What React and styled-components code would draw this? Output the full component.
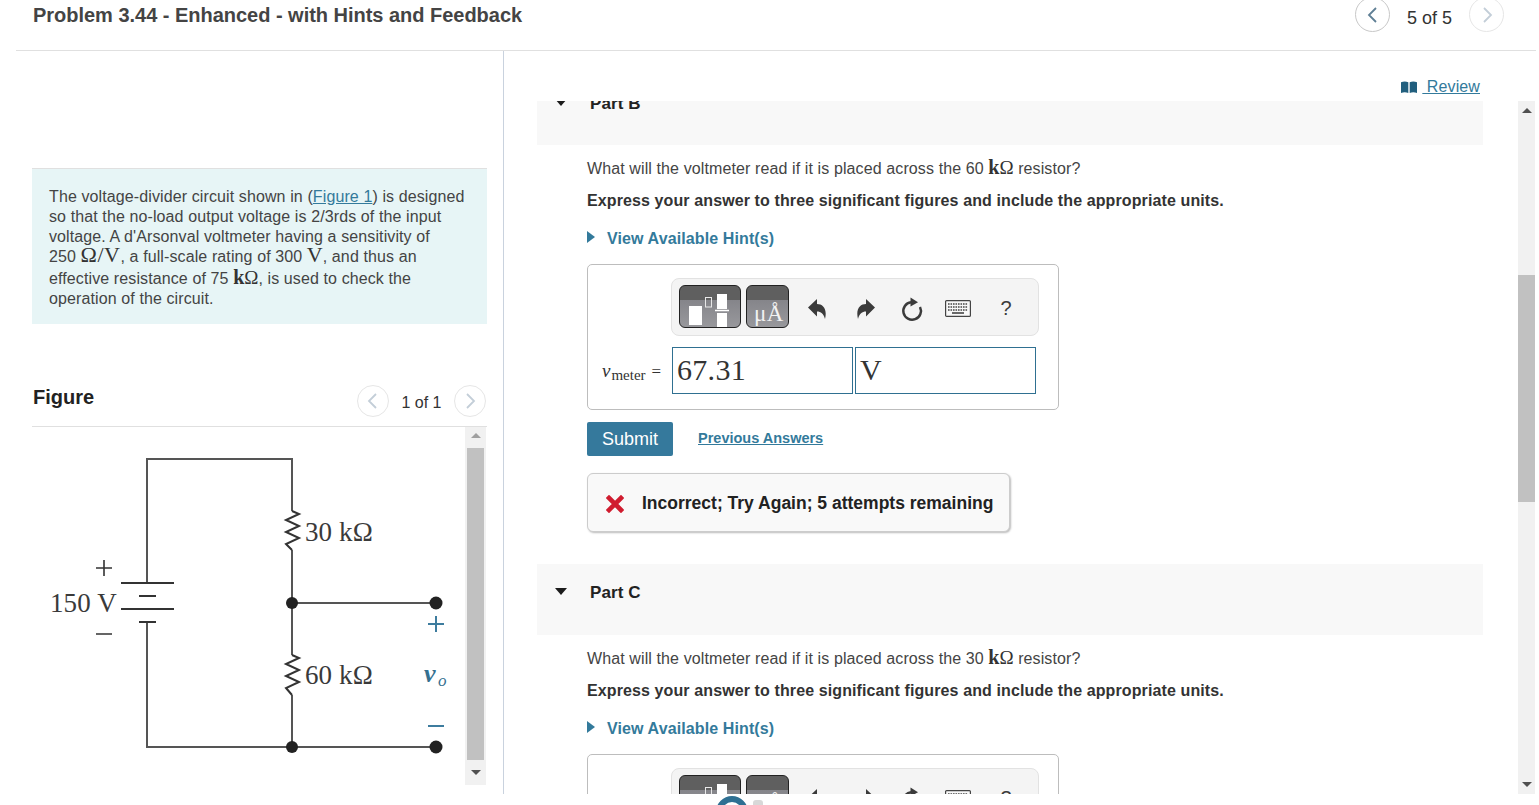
import React from "react";
import styled, { createGlobalStyle } from "styled-components";

const Global = createGlobalStyle`
  html, body { margin: 0; padding: 0; background: #fff; overflow: hidden; }
  * { box-sizing: border-box; }
`;
const sans = `"Liberation Sans", Arial, sans-serif`;
const serif = `"Liberation Serif", "Times New Roman", serif`;
const LINK = "#337a9b";

const Page = styled.div`
  position: relative; width: 1536px; height: 805px; overflow: hidden;
  font-family: ${sans}; font-size: 16px; color: #333; letter-spacing: 0.11px;
`;
const Header = styled.header`
  height: 51px; margin-left: 16px; padding: 0 32px 0 17px;
  border-bottom: 1px solid #e0e0e0;
  display: flex; justify-content: space-between; align-items: flex-start;
`;
const Title = styled.h1`
  margin: 3px 0 0; font-size: 20px; line-height: 24px; font-weight: 700; color: #444;
  letter-spacing: -0.02px;
`;
const Pager = styled.div`
  display: flex; align-items: center; margin-top: ${p => p.$top || 0}px;
`;
const PagerText = styled.span`
  color: #333; font-size: ${p => p.$size}px; text-align: center; width: ${p => p.$w}px;
  padding-top: ${p => p.$drop}px; letter-spacing: 0;
`;
const Round = styled.span`
  width: ${p => p.$d}px; height: ${p => p.$d}px; border-radius: 50%;
  border: 1px solid ${p => (p.$on ? "#c8c8c8" : "#e6e6e6")};
  display: flex; align-items: center; justify-content: center; background: #fff;
`;
const Body = styled.div`
  display: flex; height: 743px;
`;
const Left = styled.aside`
  width: 488px; margin-left: 16px; padding-left: 16px;
  border-right: 1px solid #c9d2de; flex: none;
`;
const Intro = styled.div`
  margin-top: 117px; width: 455px; height: 156px; padding: 18px 16px 0 17px;
  background: #e7f5f6; border-top: 1px solid #e0e0e0;
  line-height: 20px; color: #444;
  a { color: ${LINK}; }
`;
const Math = styled.span`
  font-family: ${serif}; font-size: ${p => p.$size || 20}px; font-weight: ${p => (p.$bold ? 700 : 400)};
  line-height: ${p => p.$lh || 0}px; color: #333; letter-spacing: ${p => p.$ls || 0}px;
`;
const NoBreak = styled.span`
  white-space: nowrap;
`;
const FigureHead = styled.div`
  margin-top: 56px; height: 47px; width: 455px; padding: 5px 1px 0 1px;
  border-bottom: 1px solid #e0e0e0;
  display: flex; justify-content: space-between; align-items: flex-start;
`;
const FigureTitle = styled.h2`
  margin: 0; font-size: 20px; line-height: 24px; font-weight: 700; color: #222; letter-spacing: 0;
`;
const FigureWrap = styled.div`
  display: flex; width: 454px; height: 358px;
`;
const CircuitBox = styled.div`
  flex: 1; min-width: 0;
  svg { display: block; }
`;
const VBar = styled.div`
  flex: none; width: ${p => p.$w}px; background: #f1f1f1;
  display: flex; flex-direction: column; align-items: center;
`;
const Arrow = styled.i`
  display: block; width: 0; height: 0; flex: none;
  border-left: 5px solid transparent; border-right: 5px solid transparent;
  ${p => (p.$down ? "border-top" : "border-bottom")}: 5px solid ${p => p.$c};
  margin: ${p => p.$m};
`;
const VTrack = styled.div`
  flex: 1; width: 100%; display: flex; justify-content: center; min-height: 0;
`;
const Thumb = styled.div`
  width: ${p => p.$w}px; background: #c1c1c1; height: ${p => p.$h}px; margin-top: ${p => p.$t}px;
`;
const Right = styled.main`
  flex: 1; min-width: 0; display: flex; flex-direction: column;
`;
const ReviewBar = styled.div`
  height: 50px; padding: 26px 56px 0 0;
  display: flex; justify-content: flex-end; align-items: flex-start;
`;
const ReviewLink = styled.a`
  display: flex; align-items: center; color: ${LINK}; text-decoration: underline;
  line-height: 20px; white-space: pre;
  svg { margin-right: 5px; }
`;
const ScrollRow = styled.div`
  flex: 1; display: flex; min-height: 0; padding-right: 1px;
`;
const Scroll = styled.div`
  flex: 1; min-width: 0; overflow: hidden; padding: 0 0 0 33px;
`;
const Inner = styled.div`
  margin-top: -26px; width: 946px;
`;
const PartBar = styled.div`
  height: ${p => p.$h}px; background: #f8f8f8; padding: 19px 0 0 18px;
  display: flex; align-items: flex-start;
`;
const Caret = styled.i`
  display: block; width: 0; height: 0; margin-top: 5px;
  border-left: 6px solid transparent; border-right: 6px solid transparent;
  border-top: 7px solid #1c1c1c;
`;
const PartTitle = styled.h3`
  margin: 0 0 0 23px; font-size: 17px; line-height: 20px; font-weight: 700; color: #222;
`;
const Section = styled.section`
  padding-left: 50px;
`;
const Question = styled.p`
  margin: 14px 0 0; line-height: 20px; color: #444;
`;
const Instruction = styled.p`
  margin: 12px 0 0; line-height: 20px; font-weight: 700; color: #333;
`;
const Hint = styled.div`
  margin-top: 18px; height: 20px; display: flex; align-items: center;
  font-weight: 700; color: ${LINK}; line-height: 20px;
`;
const HintCaret = styled.i`
  display: block; width: 0; height: 0; margin: -4px 12px 0 0;
  border-top: 6px solid transparent; border-bottom: 6px solid transparent;
  border-left: 8px solid ${LINK};
`;
const AnswerBox = styled.div`
  margin-top: 15px; width: 472px; height: 146px; padding: 13px 0 0 83px;
  border: 1px solid #bdbdbd; border-radius: 5px; background: #fff;
`;
const Toolbar = styled.div`
  width: 368px; height: 58px; padding: 6px 0 0 7px;
  background: #f4f4f4; border: 1px solid #e2e2e2; border-radius: 8px;
  display: flex; align-items: flex-start;
`;
const KeyBtn = styled.span`
  width: ${p => p.$w}px; height: 43px; margin-right: ${p => p.$mr || 0}px; flex: none;
  border: 1px solid #222; border-radius: 6px;
  background: linear-gradient(#5f5f5f 0, #5f5f5f 14px, #85858a 14px, #98989c 100%);
  color: #f2f2f2; font-family: ${serif}; font-size: 23px; line-height: 1;
  position: relative; overflow: hidden; display: block;
  svg { display: block; }
`;
const UnitGlyph = styled.span`
  position: absolute; left: 7px; bottom: 0; line-height: 27px; letter-spacing: 0.5px;
`;
const Slot = styled.span`
  width: ${p => p.$w}px; height: 47px; flex: none; color: #3b3b3b;
  display: flex; align-items: center; justify-content: center;
  font-size: 20px;
`;
const InputRow = styled.div`
  margin: 11px 0 0 -70px; display: flex; align-items: center;
`;
const VarLabel = styled.span`
  flex: none; width: 86px; margin-left: -15px; padding: 0 0 0 16px;
  font-family: ${serif}; font-size: 17px; color: #333; white-space: nowrap; letter-spacing: 0;
  em { font-size: 19px; }
  sub { font-size: 15px; vertical-align: -3px; line-height: 0; margin: 0 6px 0 1px; }
`;
const Field = styled.div`
  width: ${p => p.$w}px; height: 47px; margin-right: 2px; flex: none;
  border: 1px solid #2f7091; padding: 0 4px;
  font-family: ${serif}; font-size: 30px; line-height: 43px; color: #333; letter-spacing: 0.3px;
`;
const Actions = styled.div`
  margin-top: 12px; display: flex; align-items: center;
`;
const Submit = styled.button`
  width: 86px; height: 34px; border: 0; border-radius: 2px; padding: 0;
  background: #35799c; color: #fff; font-family: ${sans}; font-size: 18px;
`;
const Prev = styled.a`
  margin-left: 25px; margin-top: -2px; font-size: 14.5px; font-weight: 700; color: ${LINK}; text-decoration: underline;
  letter-spacing: 0;
`;
const Feedback = styled.div`
  margin-top: 17px; width: 423px; height: 59px; padding: 2px 0 0 18px;
  background: #f9f9f9; border: 1px solid #ccc; border-radius: 6px;
  box-shadow: 1px 1px 2px #bbb;
  display: flex; align-items: center;
  font-size: 17.5px; font-weight: 700; color: #222; letter-spacing: 0;
  svg { margin-right: 18px; flex: none; }
`;
const Gap = styled.div`
  height: 32px;
`;
const Footer = styled.div`
  height: 11px; position: relative;
`;
const Ring = styled.div`
  position: absolute; left: 716px; top: 2px; width: 32px; height: 32px;
  border-radius: 50%; border: 6px solid #2e7093; background: #fff;
`;
const Stub = styled.div`
  position: absolute; left: 753px; top: 6px; width: 10px; height: 8px;
  border-radius: 3px 3px 0 0; background: #d8d8d8;
`;

const Chevron = ({ dir, c }) => (
  <svg width="14" height="18" viewBox="0 0 14 18" fill="none">
    <path d={dir === "l" ? "M10 2 L3 9 L10 16" : "M4 2 L11 9 L4 16"} stroke={c} strokeWidth="1.8" />
  </svg>
);

const Circuit = () => (
  <svg width="433" height="358" viewBox="32 427 433 358" fill="none">
    <g stroke="#555" strokeWidth="2">
      <path d="M147 583 V459 H292 V511 M292 550 V655 M292 695 V747 H147 V622 M292 603 H436 M292 747 H436" />
    </g>
    <g stroke="#333" strokeWidth="2">
      <path d="M121 583 H174 M139 596 H156 M121 609 H174 M139 622 H156" />
      <path d="M292 511 L299 514 L286 520 L299 526 L286 532 L299 538 L286 544 L292 550" strokeWidth="2" />
      <path d="M292 655 L299 658 L286 664 L299 670 L286 676 L299 682 L286 688 L292 695" strokeWidth="2" />
      <path d="M96 568 H112 M104 560 V576 M96 634 H112" strokeWidth="1.6" />
    </g>
    <g fill="#222">
      <circle cx="292" cy="603" r="6" />
      <circle cx="436" cy="603" r="6.5" />
      <circle cx="292" cy="747" r="6" />
      <circle cx="436" cy="747" r="6.5" />
    </g>
    <g fontFamily={serif} fontSize="27" fill="#3a3a3a">
      <text x="305" y="541">30 kΩ</text>
      <text x="305" y="684">60 kΩ</text>
      <text x="50" y="612">150 V</text>
    </g>
    <path d="M428 624 H444 M436 616 V632 M428 726 H444" stroke="#3d7c9e" strokeWidth="2" />
    <text x="424" y="682" fontFamily={serif} fontSize="26" fontStyle="italic" fontWeight="700" fill="#35708f">v</text>
    <text x="438" y="686" fontFamily={serif} fontSize="17" fontStyle="italic" fill="#35708f">o</text>
  </svg>
);

const Book = () => (
  <svg width="16" height="12" viewBox="0 0 16 12">
    <path d="M0 1.2 Q3.8 -0.4 7.3 1.2 V12 Q3.8 10.6 0 12 Z M8.7 1.2 Q12.2 -0.4 16 1.2 V12 Q12.2 10.6 8.7 12 Z" fill="#215f7e" />
  </svg>
);

const TemplateGlyph = () => (
  <svg width="60" height="41" viewBox="0 0 60 41">
    <path d="M9 20 H22 V39 H9 Z M37 8 H47 V23 H37 Z M37 27 H47 V41 H37 Z" fill="#fff" />
    <path d="M35 24.5 H49" stroke="#fff" strokeWidth="1.4" />
    <rect x="25.5" y="11.5" width="6" height="9.5" fill="none" stroke="#e8e8e8" />
  </svg>
);
const Undo = () => (
  <svg width="20" height="22" viewBox="0 0 20 22">
    <path d="M1 9.5 L10 1 V6 C16 6 20.5 11 18 21 C16.5 15.5 14 13.5 10 13.5 V18.5 Z" fill="#3b3b3b" />
  </svg>
);
const Redo = () => (
  <svg width="20" height="22" viewBox="0 0 20 22">
    <path d="M19 9.5 L10 1 V6 C4 6 -0.5 11 2 21 C3.5 15.5 6 13.5 10 13.5 V18.5 Z" fill="#3b3b3b" />
  </svg>
);
const Reset = () => (
  <svg width="24" height="26" viewBox="0 0 24 26" fill="none">
    <path d="M11 6.2 A8.8 8.8 0 1 0 20 11" stroke="#3b3b3b" strokeWidth="2.5" />
    <path d="M10.5 1.5 L18 6.2 L10.5 10.5 Z" fill="#3b3b3b" />
  </svg>
);
const Keyboard = () => (
  <svg width="26" height="17" viewBox="0 0 26 17" fill="none">
    <rect x="0.6" y="0.6" width="24.8" height="15.8" rx="1" fill="#f8f8f8" stroke="#444" strokeWidth="1.2" />
    <path d="M3 4 H23 M3 7 H23 M3 10 H23" stroke="#444" strokeWidth="1.6" strokeDasharray="1.6 0.9" />
    <path d="M7 13 H19" stroke="#444" strokeWidth="1.6" />
  </svg>
);
const Cross = () => (
  <svg width="18" height="18" viewBox="0 0 18 18">
    <path d="M3 3 L15 15 M15 3 L3 15" stroke="#d01c2f" strokeWidth="4.6" strokeLinecap="square" />
  </svg>
);

const Tools = () => (
  <Toolbar>
    <KeyBtn $w={62} $mr={5}><TemplateGlyph /></KeyBtn>
    <KeyBtn $w={43} $mr={4}><UnitGlyph>μÅ</UnitGlyph></KeyBtn>
    <Slot $w={48}><Undo /></Slot>
    <Slot $w={50}><Redo /></Slot>
    <Slot $w={42}><Reset /></Slot>
    <Slot $w={50}><Keyboard /></Slot>
    <Slot $w={46}>?</Slot>
  </Toolbar>
);

const Ohm = ({ lh }) => (
  <NoBreak>
    <Math $bold $lh={lh}>k</Math>
    <Math $lh={lh} $size={19}>Ω</Math>
  </NoBreak>
);

export default function App() {
  return (
    <Page>
      <Global />
      <Header>
        <Title>Problem 3.44 - Enhanced - with Hints and Feedback</Title>
        <Pager $top={-3}>
          <Round $d={35} $on><Chevron dir="l" c="#5f7f95" /></Round>
          <PagerText $size={18} $w={79} $drop={7}>5 of 5</PagerText>
          <Round $d={35}><Chevron dir="r" c="#c3ced8" /></Round>
        </Pager>
      </Header>
      <Body>
        <Left>
          <Intro>
            The voltage-divider circuit shown in (<a href="#f">Figure 1</a>) is designed so that the no-load output voltage is 2/3rds of the input voltage. A d'Arsonval voltmeter having a sensitivity of <NoBreak>250 <Math $size={22} $ls={0.5}>Ω/V</Math></NoBreak>, a full-scale rating of 300 <Math $size={22}>V</Math>, and thus an effective resistance of 75 <Ohm lh={20} />, is used to check the operation of the circuit.
          </Intro>
          <FigureHead>
            <FigureTitle>Figure</FigureTitle>
            <Pager>
              <Round $d={32}><Chevron dir="l" c="#c3ced8" /></Round>
              <PagerText $size={16} $w={65} $drop={4}>1 of 1</PagerText>
              <Round $d={32}><Chevron dir="r" c="#c3ced8" /></Round>
            </Pager>
          </FigureHead>
          <FigureWrap>
            <CircuitBox><Circuit /></CircuitBox>
            <VBar $w={21}>
              <Arrow $c="#a0a0a0" $m="6px 0 0" />
              <VTrack><Thumb $w={17} $h={312} $t={10} /></VTrack>
              <Arrow $down $c="#505050" $m="0 0 10px" />
            </VBar>
          </FigureWrap>
        </Left>
        <Right>
          <ReviewBar>
            <ReviewLink href="#r"><Book />{" Review"}</ReviewLink>
          </ReviewBar>
          <ScrollRow>
            <Scroll>
              <Inner>
                <PartBar $h={70}>
                  <Caret />
                  <PartTitle>Part B</PartTitle>
                </PartBar>
                <Section>
                  <Question>What will the voltmeter read if it is placed across the 60 <Ohm /> resistor?</Question>
                  <Instruction>Express your answer to three significant figures and include the appropriate units.</Instruction>
                  <Hint><HintCaret />View Available Hint(s)</Hint>
                  <AnswerBox>
                    <Tools />
                    <InputRow>
                      <VarLabel><em>v</em><sub>meter</sub>=</VarLabel>
                      <Field $w={181}>67.31</Field>
                      <Field $w={181}>V</Field>
                    </InputRow>
                  </AnswerBox>
                  <Actions>
                    <Submit>Submit</Submit>
                    <Prev href="#p">Previous Answers</Prev>
                  </Actions>
                  <Feedback><Cross />Incorrect; Try Again; 5 attempts remaining</Feedback>
                </Section>
                <Gap />
                <PartBar $h={71}>
                  <Caret />
                  <PartTitle>Part C</PartTitle>
                </PartBar>
                <Section>
                  <Question>What will the voltmeter read if it is placed across the 30 <Ohm /> resistor?</Question>
                  <Instruction>Express your answer to three significant figures and include the appropriate units.</Instruction>
                  <Hint><HintCaret />View Available Hint(s)</Hint>
                  <AnswerBox>
                    <Tools />
                  </AnswerBox>
                </Section>
              </Inner>
            </Scroll>
            <VBar $w={17}>
              <Arrow $c="#505050" $m="7px 0 0" />
              <VTrack><Thumb $w={17} $h={227} $t={162} /></VTrack>
              <Arrow $down $c="#505050" $m="0 0 7px" />
            </VBar>
          </ScrollRow>
        </Right>
      </Body>
      <Footer>
        <Ring />
        <Stub />
      </Footer>
    </Page>
  );
}
